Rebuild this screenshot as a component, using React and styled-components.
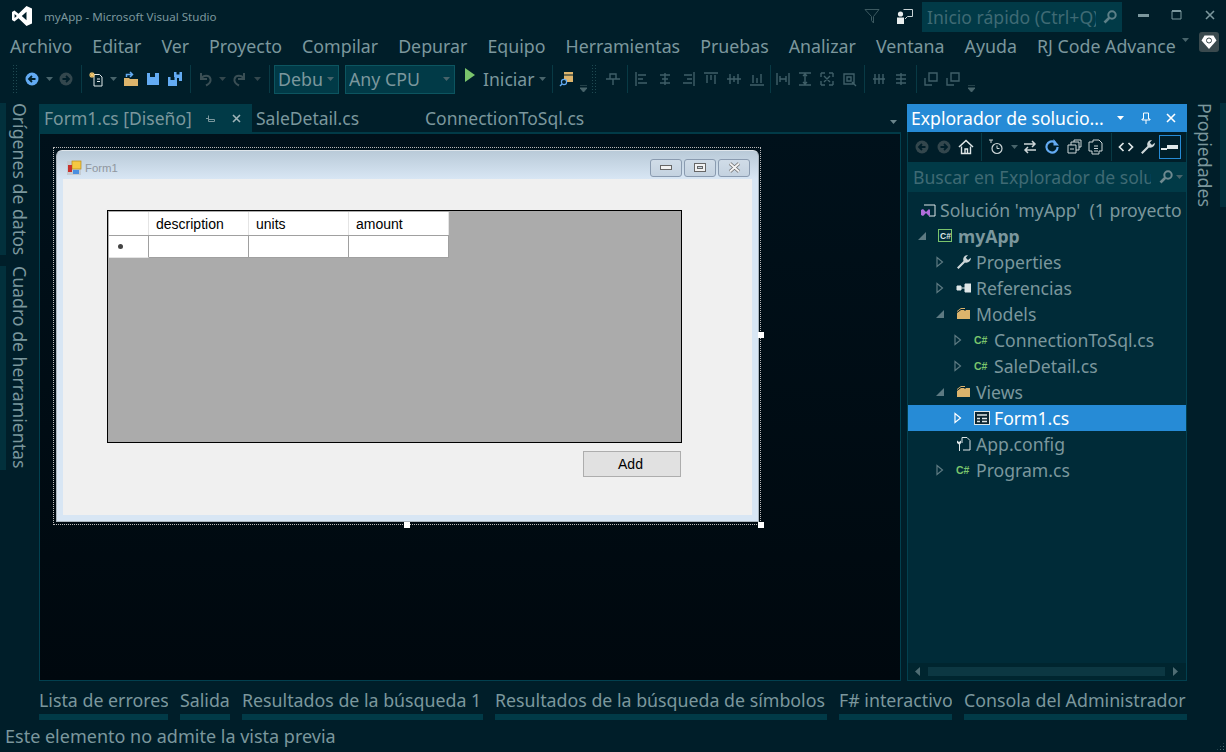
import React from 'react'
import styled, { createGlobalStyle } from 'styled-components'

const TEXT = '#7b979d'
const DIM = '#3f5f68'
const TEAL = '#013a47'
const BLUE = '#268bd6'
const FONT = '"Noto Sans", "Open Sans", sans-serif'

const GlobalStyle = createGlobalStyle`
  html, body { margin: 0; padding: 0; background: #001e29; }
  * { box-sizing: border-box; }
`

const Page = styled.div`
  width: 1226px;
  height: 752px;
  overflow: hidden;
  position: relative;
  background: #001e29;
  color: ${TEXT};
  font-family: ${FONT};
  font-size: 17.6px;
  display: flex;
  flex-direction: column;
`

/* title bar */
const TitleBar = styled.div`
  height: 32px;
  flex: none;
  display: flex;
  align-items: center;
  padding-left: 12px;
`
const AppTitle = styled.span`
  margin-left: 12px;
  font-size: 11.6px;
  margin-top: 1px;
  flex: 1;
`
const QuickLaunch = styled.div`
  width: 200px;
  height: 30px;
  margin: 2px 5px 0 1px;
  background: ${TEAL};
  display: flex;
  align-items: center;
  padding-left: 5px;
  font-size: 17.6px;
  color: #3f6a74;
  overflow: hidden;
  span { width: 169px; white-space: nowrap; overflow: hidden; flex: none; }
  svg { margin-left: 6px; flex: none; }
`
const WinButton = styled.div`
  width: 33px;
  height: 28px;
  margin-bottom: 3px;
  display: flex;
  align-items: center;
  justify-content: center;
`

/* menu */
const MenuBar = styled.div`
  height: 28px;
  flex: none;
  display: flex;
  align-items: center;
  gap: 20px;
  padding-left: 10px;
  position: relative;
  font-size: 17.8px;
  white-space: nowrap;
`
const MenuCaret = styled.div`
  display: flex;
  margin: -12px 0 0 -14px;
`
const HeartBadge = styled.div`
  position: absolute;
  left: 1199px;
  top: 0;
  display: flex;
`

/* toolbars */
const ToolBar = styled.div`
  height: 38px;
  flex: none;
  display: flex;
  align-items: center;
  padding-left: 12px;
`
const Grip = styled.div`
  width: 5px;
  height: 30px;
  margin-right: ${p => p.$after || 4}px;
  margin-left: ${p => p.$before || 0}px;
  background-image: radial-gradient(#1f4a52 1px, transparent 1px);
  background-size: 3px 3px;
  flex: none;
`
const ToolButton = styled.div`
  width: ${p => p.$w || 22}px;
  height: 24px;
  flex: none;
  display: flex;
  align-items: center;
  justify-content: center;
`
const OverflowButton = styled(ToolButton)`
  align-items: flex-end;
  margin-top: 2px;
`
const Sep = styled.div`
  width: ${p => p.$w || 8}px;
  height: 28px;
  flex: none;
  position: relative;
  &::after {
    content: '';
    position: absolute;
    left: 50%;
    top: 0;
    bottom: 0;
    width: 1px;
    background: #083a45;
  }
`
const Combo = styled.div`
  width: ${p => p.$w}px;
  height: 29px;
  margin: ${p => p.$margin || '0'};
  flex: none;
  background: ${TEAL};
  border: 1px solid #0c5560;
  padding-left: 3px;
  display: flex;
  align-items: center;
  font-size: 17.8px;
  overflow: hidden;
  white-space: nowrap;
  span { flex: 1; overflow: hidden; }
  svg { margin: 0 4px 0 2px; flex: none; }
`
const PlayBox = styled.div`
  display: flex;
  margin-bottom: 8px;
  flex: none;
`
const RunLabel = styled.span`
  font-size: 17.6px;
  margin-left: 8px;
  width: 53px;
  flex: none;
  white-space: nowrap;
`

/* main area */
const Main = styled.div`
  height: 577px;
  margin-top: 6px;
  flex: none;
  display: flex;
`
const SideStrip = styled.div`
  width: 39px;
  flex: none;
  display: flex;
  flex-direction: column;
  gap: 11px;
  margin-top: -1px;
`
const SideTab = styled.div`
  display: flex;
  flex-direction: ${p => (p.$right ? 'row-reverse' : 'row')};
  height: ${p => p.$h}px;
`
const SideBar = styled.div`
  width: 6px;
  flex: none;
  background: #02303c;
`
const SideLabel = styled.span`
  writing-mode: vertical-rl;
  font-size: 17.7px;
  line-height: 18px;
  width: 18px;
  margin: ${p => (p.$right ? '0 6px 0 0' : '0 0 0 5px')};
  white-space: nowrap;
`
const DocColumn = styled.div`
  width: 862px;
  flex: none;
  display: flex;
  flex-direction: column;
`
const DocTabs = styled.div`
  height: 28px;
  flex: none;
  display: flex;
  align-items: center;
  font-size: 17.5px;
  white-space: nowrap;
  position: relative;
`
const DocTab = styled.div`
  height: 28px;
  width: ${p => p.$w}px;
  flex: none;
  background: ${p => (p.$active ? TEAL : 'transparent')};
  display: flex;
  align-items: center;
  padding-left: ${p => p.$pad}px;
  svg { flex: none; }
`
const TabLabel = styled.span`
  width: 147px;
  flex: none;
  margin-right: 14px;
`
const TabClose = styled.div`
  display: flex;
  margin-left: 16px;
`
const TabMenu = styled.div`
  position: absolute;
  right: 4px;
  top: 16px;
  display: flex;
`
const Canvas = styled.div`
  flex: 1;
  background: linear-gradient(#00111b, #00080e);
  border: 1px solid #02404f;
  border-top: 2px solid #013a47;
  padding: 13px 0 0 13px;
`

/* designer surface */
const Selection = styled.div`
  position: relative;
  width: 708px;
  height: 378px;
  border: 1px dotted #b9b9b9;
  padding: 2px 1px 2px 2px;
`
const Handle = styled.i`
  position: absolute;
  width: 6px;
  height: 6px;
  background: #fff;
  left: ${p => p.$x}px;
  top: ${p => p.$y}px;
`
const FormWindow = styled.div`
  height: 100%;
  border-radius: 6px 6px 0 0;
  background: linear-gradient(#b9cad8 0, #d8e6f4 28px);
  border: 1px solid #aab4bd;
  border-top-color: #dfe6ec;
  padding: 0 6px 6px;
  display: flex;
  flex-direction: column;
`
const FormTitle = styled.div`
  height: 28px;
  flex: none;
  display: flex;
  align-items: center;
  padding: 5px 0 0 4px;
  font-size: 11.4px;
  color: #90979f;
  font-family: "Liberation Sans", sans-serif;
  svg { margin-right: 2px; }
`
const CaptionButtons = styled.div`
  margin-left: auto;
  margin-right: 2px;
  display: flex;
  gap: 2px;
`
const CaptionButton = styled.div`
  width: 32px;
  height: 18px;
  border: 1px solid #8a9bb0;
  border-radius: 3px;
  background: linear-gradient(#d0dce8, #c4d2e0);
  display: flex;
  align-items: center;
  justify-content: center;
  svg { margin: 0; }
`
const FormClient = styled.div`
  flex: 1;
  background: #f0f0f0;
  padding: 31px 0 0 44px;
  font-family: "Liberation Sans", sans-serif;
  font-size: 14px;
  color: #000;
`
const DataGrid = styled.div`
  width: 575px;
  height: 233px;
  background: #ababab;
  border: 1px solid #000;
  padding: 1px;
`
const GridHeaderRow = styled.div`
  display: flex;
  height: 24px;
  width: 340px;
  background: #fff;
  border-bottom: 1px solid #a0a0a0;
`
const GridRow = styled.div`
  display: flex;
  height: 22px;
  width: 340px;
`
const HeaderCell = styled.div`
  width: ${p => p.$w || 100}px;
  flex: none;
  padding-left: 7px;
  line-height: 25px;
  border-right: 1px solid #e4e4e4;
`
const RowHeader = styled.div`
  width: 40px;
  flex: none;
  background: #fff;
  border-right: 1px solid #a0a0a0;
  border-bottom: 1px solid #e4e4e4;
  padding: 8px 0 0 9px;
`
const Cell = styled.div`
  width: 100px;
  flex: none;
  background: #fff;
  border-right: 1px solid #a0a0a0;
  border-bottom: 1px solid #a0a0a0;
`
const RowDot = styled.i`
  display: block;
  width: 5px;
  height: 5px;
  border-radius: 50%;
  background: #444;
`
const AddRow = styled.div`
  width: 574px;
  display: flex;
  justify-content: flex-end;
  margin-top: 8px;
`
const AddButton = styled.div`
  width: 98px;
  height: 26px;
  background: #e1e1e1;
  border: 1px solid #adadad;
  padding-right: 3px;
  text-align: center;
  line-height: 24px;
`

/* solution explorer */
const Explorer = styled.div`
  width: 280px;
  margin-left: 6px;
  flex: none;
  background: #002b38;
  border: 1px solid #02404f;
  border-top: 0;
  display: flex;
  flex-direction: column;
`
const PaneHeader = styled.div`
  height: 28px;
  flex: none;
  margin: 0 -1px;
  background: ${BLUE};
  color: #fff;
  display: flex;
  align-items: center;
  padding-left: 4px;
  font-size: 17.6px;
  white-space: nowrap;
`
const PaneTitle = styled.span`
  width: 202px;
  flex: none;
`
const PaneAction = styled.div`
  width: ${p => p.$w || 25}px;
  margin-right: ${p => p.$after || 0}px;
  flex: none;
  display: flex;
  justify-content: center;
`
const PaneTools = styled.div`
  height: 30px;
  flex: none;
  background: #001e29;
  display: flex;
  align-items: center;
  padding-left: 3px;
`
const ActiveTool = styled(ToolButton)`
  border: 1px solid ${BLUE};
`
const SearchBox = styled.div`
  height: 30px;
  flex: none;
  background: ${TEAL};
  display: flex;
  align-items: center;
  padding-left: 5px;
  font-size: 17.6px;
  color: #3f6a74;
  white-space: nowrap;
  span { width: 238px; margin-right: 7px; overflow: hidden; flex: none; }
  svg { flex: none; margin-right: 2px; }
`
const Tree = styled.div`
  flex: 1;
  padding-top: 5px;
`
const TreeRow = styled.div`
  height: 26px;
  display: flex;
  align-items: center;
  padding-left: ${p => p.$pad}px;
  white-space: pre;
  overflow: hidden;
  font-size: 17.6px;
  font-weight: ${p => (p.$bold ? 700 : 400)};
  background: ${p => (p.$selected ? BLUE : 'transparent')};
  color: ${p => (p.$selected ? '#fff' : TEXT)};
`
const Arrow = styled.div`
  width: 20px;
  flex: none;
  display: flex;
`
const TreeIcon = styled.div`
  width: 20px;
  flex: none;
  display: flex;
`
const HScroll = styled.div`
  height: 17px;
  flex: none;
  background: #00252f;
  display: flex;
  align-items: center;
  padding: 0 8px 0 7px;
  justify-content: space-between;
`
const Thumb = styled.div`
  width: 237px;
  height: 9px;
  background: #0c3742;
`

/* bottom */
const BottomTabs = styled.div`
  height: 38px;
  flex: none;
  display: flex;
  gap: 12px;
  padding: 8px 0 0 39px;
`
const BottomTab = styled.div`
  width: ${p => p.$w}px;
  flex: none;
  height: 31px;
  border-bottom: 6px solid ${TEAL};
  font-size: 17.8px;
  line-height: 22px;
  white-space: nowrap;
  overflow: hidden;
`
const StatusBar = styled.div`
  flex: 1;
  display: flex;
  align-items: center;
  padding-left: 5px;
  font-size: 18px;
  position: relative;
`
const ResizeGrip = styled.div`
  position: absolute;
  right: 1px;
  bottom: 1px;
  width: 9px;
  height: 9px;
  background-image: radial-gradient(#4f6d74 0.8px, transparent 0.8px);
  background-size: 3px 3px;
  clip-path: polygon(100% 0, 100% 100%, 0 100%);
`

/* drawings */
const Svg = ({ s = 16, w, h, children, ...rest }) => (
  <svg width={w || s} height={h || s} viewBox={`0 0 ${w || s} ${h || s}`} fill="none" {...rest}>{children}</svg>
)

const VsLogo = () => (
  <Svg w={20} h={20}>
    <path fillRule="evenodd" fill="#fff" d="M14.5 0L20 2.5V17.5L14.5 20 6.5 12.3 2.4 15.4 0 14V6L2.4 4.6 6.5 7.7ZM14.5 5.8L9.8 10 14.5 14.2ZM2.6 8V12L4.8 10Z" />
  </Svg>
)
const Funnel = () => (
  <Svg><path d="M1 1.5H15L9.5 8.5V15L7.5 12.5V8.5Z" stroke="#3c5960" /></Svg>
)
const Feedback = () => (
  <Svg w={18} h={17}>
    <path d="M7.5 1.5H16.5V8.5H11.5L9 11" stroke="#c8d2d4" />
    <circle cx="4.5" cy="6" r="2.6" fill="#e8eeee" />
    <path d="M1 9.5H8V16H1Z" fill="#e8eeee" />
  </Svg>
)
const Search = ({ c = '#6f8a90' }) => (
  <Svg>
    <circle cx="10" cy="6" r="3.7" stroke={c} strokeWidth="2" />
    <path d="M7.3 8.8L2.5 13.5" stroke={c} strokeWidth="2.6" />
  </Svg>
)
const Caret = ({ c = '#48646b' }) => (
  <Svg w={7} h={4}><path d="M0 0H7L3.5 4Z" fill={c} /></Svg>
)
const Heart = () => (
  <Svg w={20} h={20}>
    <rect width="20" height="20" rx="3" fill="#3a4a4e" />
    <path d="M10 17L2.5 8.5 5.5 3.5H14.5L17.5 8.5Z" fill="#fff" />
    <circle cx="10" cy="8.5" r="2.5" stroke="#3a4a4e" />
  </Svg>
)
const NavIcon = ({ dir, on }) => (
  <Svg>
    <circle cx="8" cy="8" r="6.5" fill={on ? '#63abf3' : '#33474d'} />
    <path d={dir === 'l' ? 'M11.5 8H5M8 5L5 8 8 11' : 'M4.5 8H11M8 5L11 8 8 11'} stroke={on ? '#00202b' : '#001e29'} strokeWidth="1.8" />
  </Svg>
)
const NewProject = () => (
  <Svg>
    <path d="M6 3.5H11.5L14 6V15H6Z" stroke="#dfe7e8" />
    <path d="M9 8H12M9 10.5H12" stroke="#dfe7e8" />
    <path d="M4 1V7M1 4H7M2 2L6 6M6 2L2 6" stroke="#f3c66b" strokeWidth="1.1" />
  </Svg>
)
const OpenFile = () => (
  <Svg>
    <path d="M1 7H6L7 8H15V15H1Z" fill="#dcb46c" />
    <path d="M3.5 6V3.5H9M7 1L9.5 3.5 7 6" stroke="#63abf3" strokeWidth="1.5" />
  </Svg>
)
const Save = () => (
  <Svg>
    <path d="M2 2H14V14H2Z" fill="#63abf3" />
    <path d="M5 2H10V6H5Z" fill="#001e29" />
  </Svg>
)
const SaveAll = () => (
  <Svg>
    <path d="M7 1H15V10H12V7H7Z" fill="#63abf3" />
    <path d="M1 6H10V15H1Z" fill="#63abf3" />
    <path d="M3.5 6H7.5V9H3.5Z" fill="#001e29" />
    <path d="M9.5 1H12.5V3.5H9.5Z" fill="#001e29" />
  </Svg>
)
const Undo = ({ flip }) => (
  <Svg style={flip ? { transform: 'scaleX(-1)' } : undefined}>
    <path d="M4 2V8H10M4.5 7.5C6 4 12.5 3.5 13.5 8 14 10.5 12 13 9 14.5" stroke="#3a4f55" strokeWidth="2" />
  </Svg>
)
const Play = () => (
  <Svg w={10} h={14}><path d="M0 0L10 7 0 14Z" fill="#7ac46c" /></Svg>
)
const FindFile = () => (
  <Svg>
    <path d="M5 1H14V11H5Z" fill="#dcb46c" />
    <path d="M5 4H14" stroke="#001e29" />
    <circle cx="5" cy="11" r="2.6" fill="#001e29" stroke="#63abf3" strokeWidth="1.2" />
    <path d="M3 13L1 15" stroke="#63abf3" strokeWidth="1.4" />
  </Svg>
)
const Overflow = () => (
  <Svg w={7} h={7}><path d="M0 0H7M0 3H7L3.5 7Z" stroke="#48646b" fill="#48646b" strokeWidth="1" /></Svg>
)
const Layout = ({ d }) => (
  <Svg><path d={d} stroke={DIM} strokeWidth="1.4" /></Svg>
)
const layoutIcons = {
  center0: 'M1 8H15M5 3H11V8H5ZM8 8V14',
  left: 'M2 1V15M4 4H12M4 8H9M4 12H13',
  center: 'M8 2V14M3 4H13M5 8H11M3 12H13',
  right: 'M14 1V15M4 4H12M7 8H12M3 12H12',
  top: 'M1 2H15M4 4V12M8 4V9M12 4V13',
  middle: 'M1 8H15M4 3V13M8 5V11M12 3V13',
  bottom: 'M1 14H15M4 4V12M8 7V12M12 3V12',
  same: 'M2 2V14M14 2V14M5 8H11M5 5V11M11 5V11',
  height: 'M2 2H14M2 14H14M8 3V13M6 5L8 3 10 5M6 11L8 13 10 11',
  size: 'M2 2H6M2 2V6M14 2H10M14 2V6M2 14H6M2 14V10M14 14H10M14 14V10M5 5L11 11M11 5L5 11',
  grid: 'M3 3H13V13H3ZM6 6H10V10H6ZM11 11L15 15',
  hspace: 'M4 3V13M8 3V13M12 3V13M2 8H14',
  vspace: 'M3 4H13M3 8H13M3 12H13M8 2V14',
  front: 'M6 2H14V10H6ZM2 7V14H9',
}
const Home = () => (
  <Svg>
    <path d="M1 8L8 1.5 15 8" stroke="#dfe7e8" strokeWidth="1.6" />
    <path d="M3.5 7.5V14.5H12.5V7.5M7 14.5V10H9.5V14.5" stroke="#dfe7e8" strokeWidth="1.4" />
  </Svg>
)
const History = () => (
  <Svg w={18} h={16}>
    <circle cx="9" cy="9.5" r="5" stroke="#cdd6d8" strokeWidth="1.2" />
    <path d="M9 6.5V9.5H11.5" stroke="#cdd6d8" />
    <path d="M1 1H5M3 1V4" stroke="#cdd6d8" />
  </Svg>
)
const Sync = () => (
  <Svg>
    <path d="M2 5H13M10 2L13 5 10 8" stroke="#cdd6d8" strokeWidth="1.5" />
    <path d="M14 11H3M6 8L3 11 6 14" stroke="#cdd6d8" strokeWidth="1.5" />
  </Svg>
)
const Refresh = () => (
  <Svg>
    <path d="M11 3.2A5.6 5.6 0 1 0 13.6 8" stroke="#63abf3" strokeWidth="2.2" />
    <path d="M9.5 0V6.5H15Z" fill="#63abf3" />
  </Svg>
)
const Collapse = () => (
  <Svg>
    <path d="M2 6H10V14H2ZM5 6V3H13V11H10M8 3V1H15V8H13" stroke="#cdd6d8" />
    <path d="M4 10H8" stroke="#cdd6d8" />
  </Svg>
)
const CopyFiles = () => (
  <Svg>
    <path d="M1 3H5V1H11L14 4V12H11V15H4V12H1Z" stroke="#cdd6d8" />
    <path d="M6 7H10M6 9.5H10M6 12H10" stroke="#cdd6d8" />
  </Svg>
)
const Code = () => (
  <Svg><path d="M5.5 4L1.5 8 5.5 12M10.5 4L14.5 8 10.5 12" stroke="#dfe7e8" strokeWidth="1.7" /></Svg>
)
const Wrench = ({ c = '#cdd6d8' }) => (
  <Svg>
    <path d="M2.5 15L1 13.5 7.5 7C6.5 4 8.5 1 12 1L9.8 3.8 12 6 14.8 3.8C15.2 7 12 9.5 9 8.5Z" fill={c} />
  </Svg>
)
const PreviewToggle = () => (
  <Svg w={18} h={10}>
    <path d="M6 3H17V7H6Z" fill="#dfe7e8" />
    <path d="M0 7H6" stroke="#dfe7e8" strokeWidth="2" />
  </Svg>
)
const Pin = ({ c }) => (
  <Svg w={10} h={12}><path d="M2.5 1H7.5V7H9V8H1V7H2.5ZM5 8V12" stroke={c} strokeWidth="1" /></Svg>
)
const SidePin = () => (
  <Svg w={11} h={9}><path d="M1 4.5H3.5M3.5 1.5V7.5H9.5V5.5H3.5" stroke="#7b979d" /></Svg>
)
const Close = ({ c, s = 10 }) => (
  <Svg w={s} h={s}><path d={`M1 1L${s - 1} ${s - 1}M${s - 1} 1L1 ${s - 1}`} stroke={c} strokeWidth="1.6" /></Svg>
)
const Minimize = () => <Svg w={11} h={4}><rect width="11" height="3" y="1" fill="#7b979d" /></Svg>
const Maximize = () => <Svg w={11} h={11}><path d="M1 2H10V10H1Z" stroke="#7b979d" /><path d="M1 2H10" stroke="#7b979d" strokeWidth="2" /></Svg>
const SolutionIcon = () => (
  <Svg>
    <path d="M4 3H15V14H9" stroke="#dfe7e8" />
    <path d="M1 8L3 7 6 10 9 7 10 8V13L9 14 6 11 3 14 1 13Z" fill="#b06ddc" />
  </Svg>
)
const CsProject = () => (
  <Svg w={15} h={14}>
    <rect x=".5" y=".5" width="13" height="12" stroke="#7ac46c" />
    <text x="2" y="10" fontFamily="Liberation Sans" fontSize="8.5" fontWeight="700" fill="#dfe7e8">C#</text>
  </Svg>
)
const CsFile = () => (
  <Svg w={14} h={10}>
    <text x="0" y="9" fontFamily="Liberation Sans" fontSize="10.5" fontWeight="700" fill="#7ac46c">C#</text>
  </Svg>
)
const RefIcon = () => (
  <Svg w={15} h={14}>
    <path d="M1 5H5V9H1ZM9 3H15V11H9ZM5 7H9" fill="#dfe7e8" stroke="#dfe7e8" />
  </Svg>
)
const Folder = () => (
  <Svg w={15} h={14}>
    <path d="M1 4L5 1H9V3H14V12H1Z" fill="#dcb46c" />
    <path d="M1 5.5L5 2.5H9V4" stroke="#001e29" />
  </Svg>
)
const FormIcon = () => (
  <Svg w={16} h={14}>
    <rect x=".5" y=".5" width="15" height="13" fill="#0c2531" stroke="#dfe7e8" />
    <path d="M3 4H13M3 7.5H6M8 7.5H13M3 10.5H6M8 10.5H13" stroke="#dfe7e8" strokeWidth="1.4" />
  </Svg>
)
const ConfigIcon = () => (
  <Svg>
    <path d="M6 7V1.5H11L14 4.5V14H7" stroke="#dfe7e8" />
    <path d="M3 15V8.5L1 7V4.5L3 6 5 4.5V7L4 8.5V15Z" fill="#dfe7e8" />
  </Svg>
)
const Expand = ({ c = '#5d7a82' }) => (
  <Svg w={8} h={12}><path d="M1 1.5L6.5 6 1 10.5Z" stroke={c} strokeWidth="1.2" /></Svg>
)
const Expanded = () => (
  <Svg w={8} h={8}><path d="M8 0V8H0Z" fill="#5d7a82" /></Svg>
)
const ScrollArrow = ({ left }) => (
  <Svg w={5} h={9}><path d={left ? 'M5 0V9L0 4.5Z' : 'M0 0V9L5 4.5Z'} fill="#4f6d74" /></Svg>
)
const FormGlyph = () => (
  <Svg>
    <rect width="14" height="14" y="1" fill="#c5cbd1" />
    <rect x="5" y="1" width="9" height="8" fill="#f5c842" stroke="#b58b1e" strokeWidth=".7" />
    <rect x="1" y="5" width="4" height="7" fill="#c9302c" />
    <rect x="6" y="10" width="6" height="4" fill="#4a8fe0" />
  </Svg>
)
const CapMin = () => <Svg w={12} h={6}><rect x=".5" y=".5" width="11" height="4" fill="#f2f2f2" stroke="#666" /></Svg>
const CapMax = () => (
  <Svg w={12} h={9}>
    <rect x=".5" y=".5" width="11" height="8" fill="#f2f2f2" stroke="#666" />
    <rect x="3.5" y="3.5" width="5" height="2" fill="#c8d4e0" stroke="#666" />
  </Svg>
)
const CapClose = () => (
  <Svg w={13} h={11}><path d="M2 1.5L11 9.5M11 1.5L2 9.5" stroke="#666" strokeWidth="3.4" /><path d="M2 1.5L11 9.5M11 1.5L2 9.5" stroke="#f2f2f2" strokeWidth="2" /></Svg>
)

const menus = ['Archivo', 'Editar', 'Ver', 'Proyecto', 'Compilar', 'Depurar', 'Equipo', 'Herramientas', 'Pruebas', 'Analizar', 'Ventana', 'Ayuda', 'RJ Code Advance']

const bottomTabs = [
  ['Lista de errores', 129],
  ['Salida', 50],
  ['Resultados de la búsqueda 1', 241],
  ['Resultados de la búsqueda de símbolos', 332],
  ['F# interactivo', 113],
  ['Consola del Administrador', 223],
]

const treeRows = [
  { label: "Solución 'myApp'  (1 proyecto", pad: 12, icon: <SolutionIcon />, noArrow: true },
  { label: 'myApp', pad: 10, icon: <CsProject />, open: true, bold: true },
  { label: 'Properties', pad: 28, icon: <Wrench /> },
  { label: 'Referencias', pad: 28, icon: <RefIcon /> },
  { label: 'Models', pad: 28, icon: <Folder />, open: true },
  { label: 'ConnectionToSql.cs', pad: 46, icon: <CsFile /> },
  { label: 'SaleDetail.cs', pad: 46, icon: <CsFile /> },
  { label: 'Views', pad: 28, icon: <Folder />, open: true },
  { label: 'Form1.cs', pad: 46, icon: <FormIcon />, selected: true },
  { label: 'App.config', pad: 28, icon: <ConfigIcon />, hidden: true },
  { label: 'Program.cs', pad: 28, icon: <CsFile /> },
]

const TreeArrow = ({ row }) => {
  if (row.noArrow) return null
  if (row.hidden) return <Arrow />
  return (
    <Arrow>
      {row.open ? <Expanded /> : <Expand c={row.selected ? '#fff' : undefined} />}
    </Arrow>
  )
}

export default function App() {
  return (
    <Page>
      <GlobalStyle />
      <TitleBar>
        <VsLogo />
        <AppTitle>myApp - Microsoft Visual Studio</AppTitle>
        <ToolButton $w={33}><Funnel /></ToolButton>
        <ToolButton $w={33}><Feedback /></ToolButton>
        <QuickLaunch>
          <span>Inicio rápido (Ctrl+Q)</span>
          <Search c="#5d8088" />
        </QuickLaunch>
        <WinButton><Minimize /></WinButton>
        <WinButton><Maximize /></WinButton>
        <WinButton><Close c="#7b979d" /></WinButton>
      </TitleBar>

      <MenuBar>
        {menus.map(m => <span key={m}>{m}</span>)}
        <MenuCaret><Caret /></MenuCaret>
        <HeartBadge><Heart /></HeartBadge>
      </MenuBar>

      <ToolBar>
        <Grip />
        <ToolButton><NavIcon dir="l" on /></ToolButton>
        <ToolButton $w={12}><Caret /></ToolButton>
        <ToolButton><NavIcon dir="r" /></ToolButton>
        <Sep />
        <ToolButton><NewProject /></ToolButton>
        <ToolButton $w={13}><Caret /></ToolButton>
        <ToolButton><OpenFile /></ToolButton>
        <ToolButton><Save /></ToolButton>
        <ToolButton><SaveAll /></ToolButton>
        <Sep />
        <ToolButton><Undo /></ToolButton>
        <ToolButton $w={13}><Caret c="#33474d" /></ToolButton>
        <ToolButton><Undo flip /></ToolButton>
        <ToolButton $w={12}><Caret c="#33474d" /></ToolButton>
        <Sep $w={11} />
        <Combo $w={65}><span>Debu</span><Caret /></Combo>
        <Combo $w={110} $margin="0 10px 0 6px"><span>Any CPU</span><Caret /></Combo>
        <PlayBox><Play /></PlayBox>
        <RunLabel>Iniciar</RunLabel>
        <ToolButton $w={12}><Caret /></ToolButton>
        <Sep />
        <ToolButton><FindFile /></ToolButton>
        <OverflowButton $w={10}><Overflow /></OverflowButton>
        <Grip $before={3} $after={6} />
        <ToolButton><Layout d={layoutIcons.center0} /></ToolButton>
        <Sep $w={6} />
        <ToolButton $w={23}><Layout d={layoutIcons.left} /></ToolButton>
        <ToolButton $w={23}><Layout d={layoutIcons.center} /></ToolButton>
        <ToolButton $w={23}><Layout d={layoutIcons.right} /></ToolButton>
        <ToolButton $w={23}><Layout d={layoutIcons.top} /></ToolButton>
        <ToolButton $w={23}><Layout d={layoutIcons.middle} /></ToolButton>
        <ToolButton $w={23}><Layout d={layoutIcons.bottom} /></ToolButton>
        <Sep $w={4} />
        <ToolButton><Layout d={layoutIcons.same} /></ToolButton>
        <ToolButton><Layout d={layoutIcons.height} /></ToolButton>
        <ToolButton><Layout d={layoutIcons.size} /></ToolButton>
        <ToolButton><Layout d={layoutIcons.grid} /></ToolButton>
        <Sep />
        <ToolButton><Layout d={layoutIcons.hspace} /></ToolButton>
        <ToolButton><Layout d={layoutIcons.vspace} /></ToolButton>
        <Sep />
        <ToolButton><Layout d={layoutIcons.front} /></ToolButton>
        <ToolButton><Layout d={layoutIcons.front} /></ToolButton>
        <OverflowButton $w={14}><Overflow /></OverflowButton>
      </ToolBar>

      <Main>
        <SideStrip>
          <SideTab $h={152}>
            <SideBar />
            <SideLabel>Orígenes de datos</SideLabel>
          </SideTab>
          <SideTab $h={204}>
            <SideBar />
            <SideLabel>Cuadro de herramientas</SideLabel>
          </SideTab>
        </SideStrip>

        <DocColumn>
          <DocTabs>
            <DocTab $active $w={213} $pad={5}>
              <TabLabel>Form1.cs [Diseño]</TabLabel>
              <SidePin />
              <TabClose><Close c="#9fb4b8" s={9} /></TabClose>
            </DocTab>
            <DocTab $w={173} $pad={4}>SaleDetail.cs</DocTab>
            <DocTab $w={170} $pad={0}>ConnectionToSql.cs</DocTab>
            <TabMenu><Caret c="#6a858b" /></TabMenu>
          </DocTabs>
          <Canvas>
            <Selection>
              <FormWindow>
                <FormTitle>
                  <FormGlyph />
                  Form1
                  <CaptionButtons>
                    <CaptionButton><CapMin /></CaptionButton>
                    <CaptionButton><CapMax /></CaptionButton>
                    <CaptionButton><CapClose /></CaptionButton>
                  </CaptionButtons>
                </FormTitle>
                <FormClient>
                  <DataGrid>
                    <GridHeaderRow>
                      <HeaderCell $w={40} />
                      <HeaderCell>description</HeaderCell>
                      <HeaderCell>units</HeaderCell>
                      <HeaderCell>amount</HeaderCell>
                    </GridHeaderRow>
                    <GridRow>
                      <RowHeader><RowDot /></RowHeader>
                      <Cell />
                      <Cell />
                      <Cell />
                    </GridRow>
                  </DataGrid>
                  <AddRow><AddButton>Add</AddButton></AddRow>
                </FormClient>
              </FormWindow>
              <Handle $x={704} $y={184} />
              <Handle $x={350} $y={374} />
              <Handle $x={704} $y={374} />
            </Selection>
          </Canvas>
        </DocColumn>

        <Explorer>
          <PaneHeader>
            <PaneTitle>Explorador de solucio...</PaneTitle>
            <PaneAction $w={14} $after={6}><Caret c="#fff" /></PaneAction>
            <PaneAction><Pin c="#fff" /></PaneAction>
            <PaneAction><Close c="#fff" /></PaneAction>
          </PaneHeader>
          <PaneTools>
            <ToolButton><NavIcon dir="l" /></ToolButton>
            <ToolButton><NavIcon dir="r" /></ToolButton>
            <ToolButton><Home /></ToolButton>
            <Sep />
            <ToolButton $w={24}><History /></ToolButton>
            <ToolButton $w={10}><Caret /></ToolButton>
            <ToolButton><Sync /></ToolButton>
            <ToolButton><Refresh /></ToolButton>
            <ToolButton><Collapse /></ToolButton>
            <ToolButton><CopyFiles /></ToolButton>
            <Sep />
            <ToolButton><Code /></ToolButton>
            <ToolButton><Wrench /></ToolButton>
            <ActiveTool><PreviewToggle /></ActiveTool>
          </PaneTools>
          <SearchBox>
            <span>Buscar en Explorador de solución</span>
            <Search />
            <Caret />
          </SearchBox>
          <Tree>
            {treeRows.map(row => (
              <TreeRow key={row.label} $pad={row.pad} $bold={row.bold} $selected={row.selected}>
                <TreeArrow row={row} />
                <TreeIcon>{row.icon}</TreeIcon>
                {row.label}
              </TreeRow>
            ))}
          </Tree>
          <HScroll>
            <ScrollArrow left />
            <Thumb />
            <ScrollArrow />
          </HScroll>
        </Explorer>

        <SideStrip>
          <SideTab $h={104} $right>
            <SideBar />
            <SideLabel $right>Propiedades</SideLabel>
          </SideTab>
        </SideStrip>
      </Main>

      <BottomTabs>
        {bottomTabs.map(([label, w]) => <BottomTab key={label} $w={w}>{label}</BottomTab>)}
      </BottomTabs>
      <StatusBar>
        Este elemento no admite la vista previa
        <ResizeGrip />
      </StatusBar>
    </Page>
  )
}
